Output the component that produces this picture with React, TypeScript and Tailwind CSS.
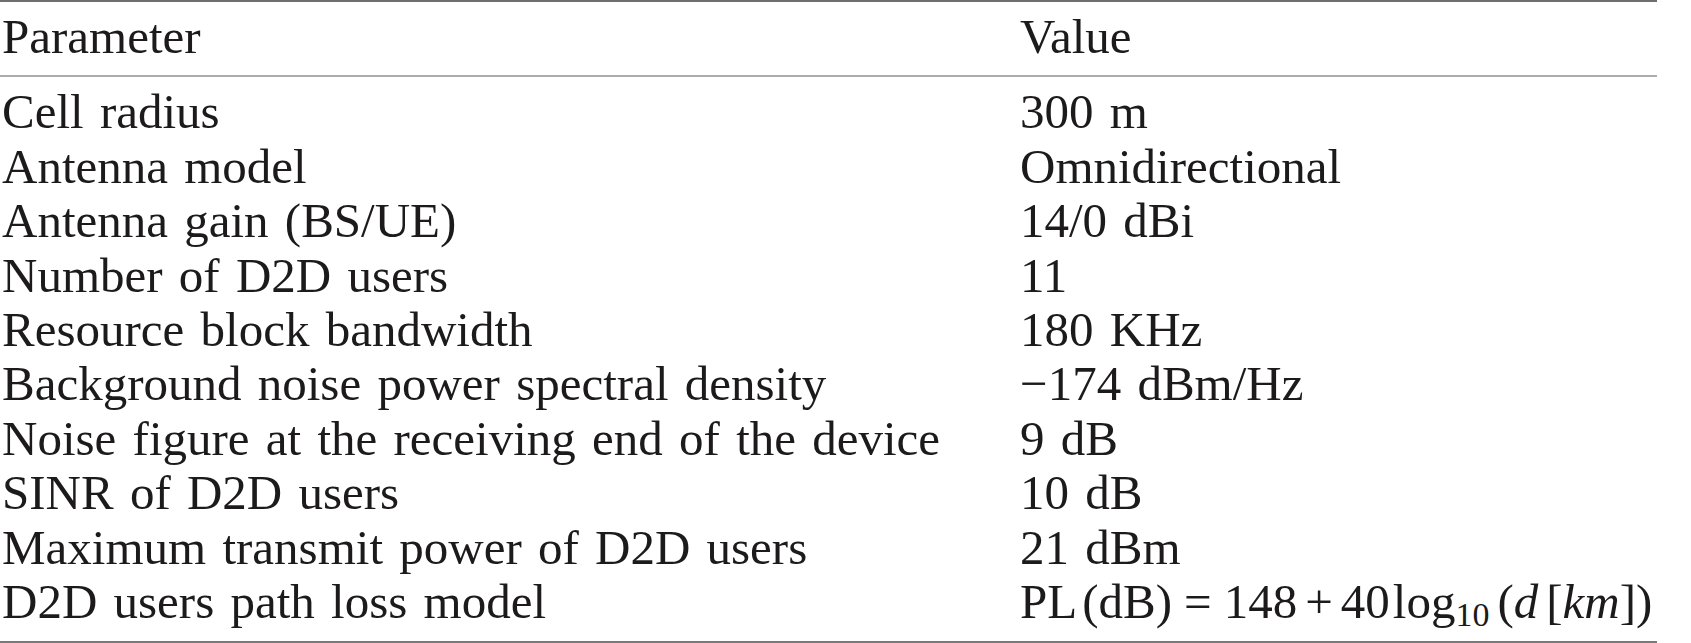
const rows: [string, React.ReactNode][] = [
  ["Cell radius", "300 m"],
  ["Antenna model", "Omnidirectional"],
  ["Antenna gain (BS/UE)", "14/0 dBi"],
  ["Number of D2D users", "11"],
  ["Resource block bandwidth", "180 KHz"],
  ["Background noise power spectral density", "\u2212174 dBm/Hz"],
  ["Noise figure at the receiving end of the device", "9 dB"],
  ["SINR of D2D users", "10 dB"],
  ["Maximum transmit power of D2D users", "21 dBm"],
  [
    "D2D users path loss model",
    <span className="whitespace-nowrap [word-spacing:0]">
      PL<span className="ml-[5px]">(dB)</span>
      <span className="mx-[12px]">=</span>148
      <span className="mx-[8px]">+</span>40<span className="ml-[3px]">log</span>
      <sub className="text-[34px] relative top-[8px] align-baseline">10</sub>
      <span className="ml-[8px]">(</span>
      <i>d</i>
      <span className="ml-[8px]">[</span>
      <i>km</i>]{")"}
    </span>,
  ],
];

export default function App() {
  return (
    <div className="w-[1691px] h-[643px] bg-white text-[#1c1a1b] font-['Liberation_Serif',serif] text-[49px] leading-[54.4px] [word-spacing:4px]">
      <div className="w-[1657px] border-t-2 border-[#6e6e6e]">
        <div className="grid grid-cols-[1018px_1fr] pl-[2px] pt-[8px] pb-[11px] border-b-2 border-[#adadad]">
          <div>Parameter</div>
          <div>Value</div>
        </div>
        <div className="pt-[8px] pb-[12px] border-b-2 border-[#7a7a7a]">
          {rows.map(([p, v], i) => (
            <div key={i} className="grid grid-cols-[1018px_1fr] pl-[2px]">
              <div className="whitespace-nowrap">{p}</div>
              <div className="whitespace-nowrap">{v}</div>
            </div>
          ))}
        </div>
      </div>
    </div>
  );
}
